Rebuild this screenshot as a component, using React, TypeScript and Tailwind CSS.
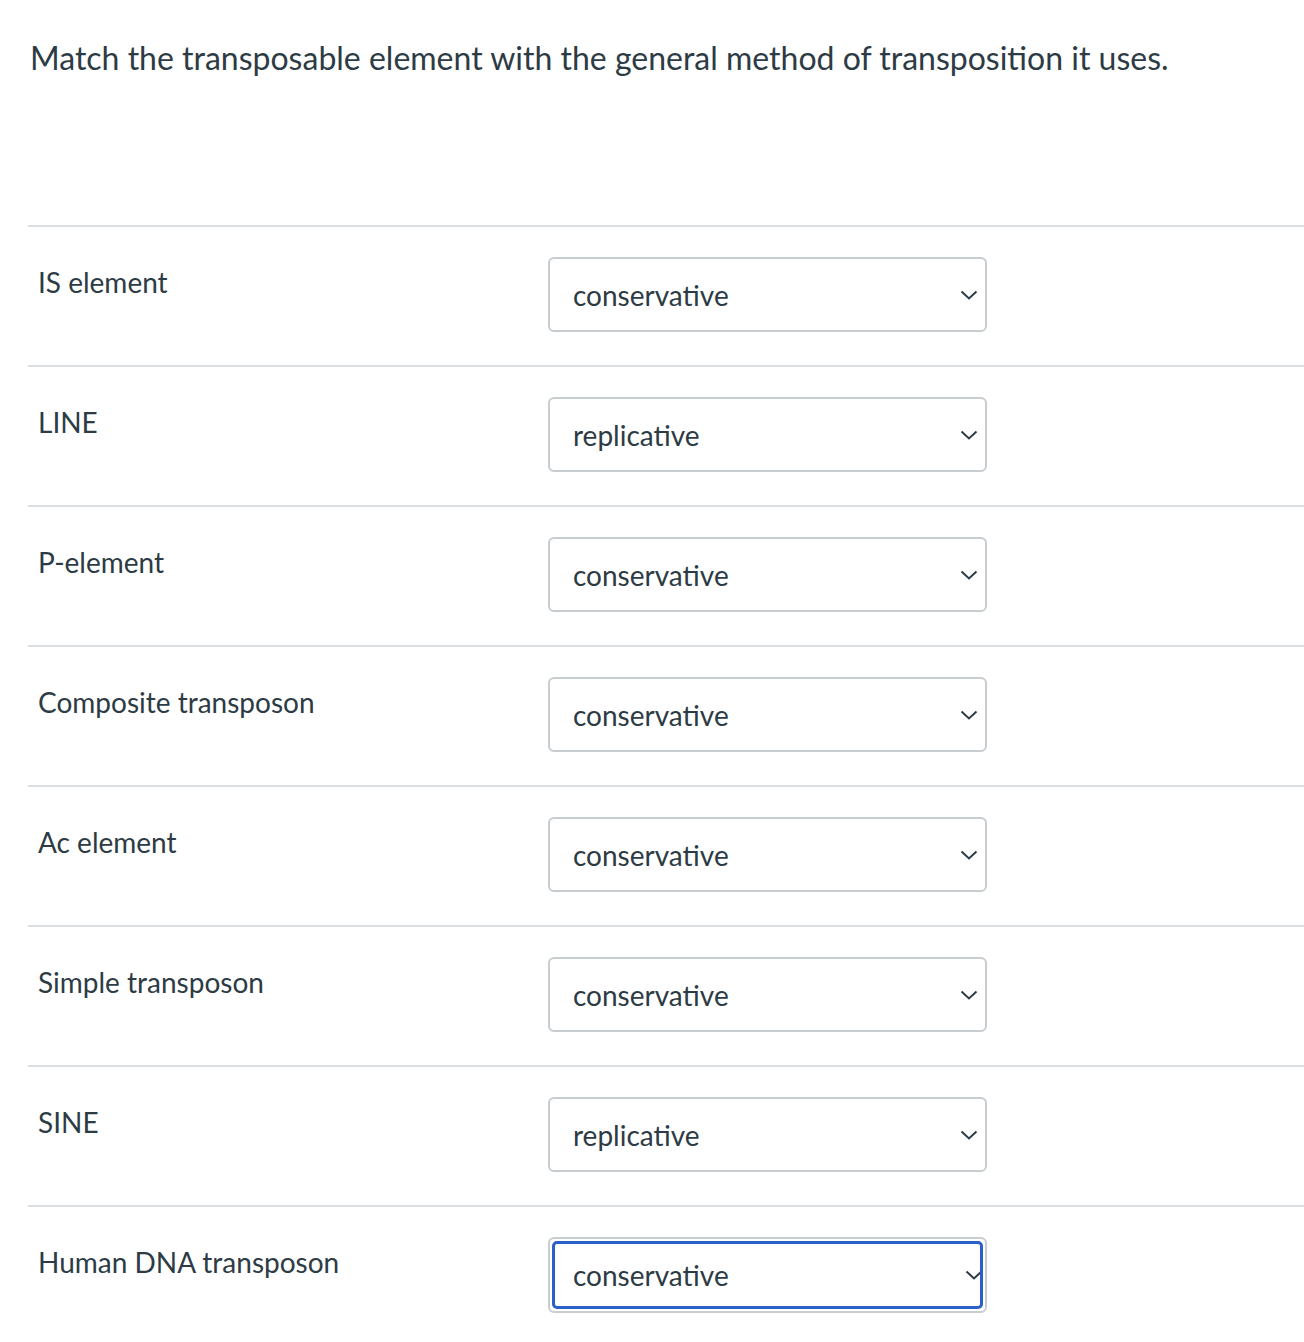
const rows = [
  { label: 'IS element', value: 'conservative' },
  { label: 'LINE', value: 'replicative' },
  { label: 'P-element', value: 'conservative' },
  { label: 'Composite transposon', value: 'conservative' },
  { label: 'Ac element', value: 'conservative' },
  { label: 'Simple transposon', value: 'conservative' },
  { label: 'SINE', value: 'replicative' },
  { label: 'Human DNA transposon', value: 'conservative', focused: true },
];

function Chevron() {
  return (
    <svg width="18" height="10" viewBox="0 0 18 10" fill="none" className="shrink-0">
      <path d="M1.5 1.5 L9 8.5 L16.5 1.5" stroke="#2d3b45" strokeWidth="2" />
    </svg>
  );
}

export default function App() {
  return (
    <div className="min-h-[1342px] bg-white pl-[28px] text-[#2d3b45]" style={{ fontFamily: 'Lato, "Open Sans", sans-serif' }}>
      <h1 className="pt-[36px] pl-[2px] text-[32px] leading-[44px] font-normal">
        Match the transposable element with the general method of transposition it uses.
      </h1>
      <div className="mt-[145px]">
        {rows.map((row, i) => (
          <div key={i} className="flex h-[140px] border-t-2 border-[#dcdfe1]">
            <div className="w-[520px] pt-[37px] pl-[10px] text-[28px] leading-[36px]">{row.label}</div>
            <div className="pt-[30px]">
              {row.focused ? (
                <div className="h-[76px] w-[439px] rounded-[6px] border-2 border-[#c7cdd1] p-[2px]">
                  <div className="flex h-full items-center justify-between overflow-hidden rounded-[5px] border-[3px] border-[#2b5fc9] pl-[18px] pr-0 text-[28px]">
                    <span>{row.value}</span>
                    <div className="mr-[-3px]">
                      <Chevron />
                    </div>
                  </div>
                </div>
              ) : (
                <div className="flex h-[75px] w-[439px] items-center justify-between rounded-[6px] border-2 border-[#c7cdd1] pl-[23px] pr-[7px] text-[28px]">
                  <span>{row.value}</span>
                  <Chevron />
                </div>
              )}
            </div>
          </div>
        ))}
      </div>
    </div>
  );
}
